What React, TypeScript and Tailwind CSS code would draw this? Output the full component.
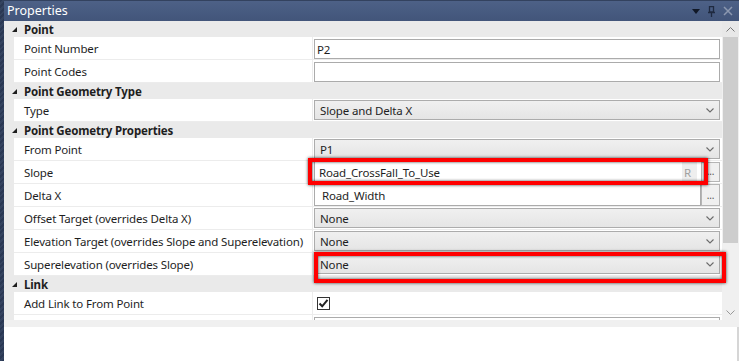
import React from 'react';

type Row =
  | { kind: 'cat'; label: string }
  | { kind: 'text'; label: string; value: string; cut?: boolean }
  | { kind: 'drop'; label: string; value: string; mark?: boolean }
  | { kind: 'slope'; label: string; value: string }
  | { kind: 'dots'; label: string; value: string }
  | { kind: 'check'; label: string };

const rows: Row[] = [
  { kind: 'cat', label: 'Point' },
  { kind: 'text', label: 'Point Number', value: 'P2' },
  { kind: 'text', label: 'Point Codes', value: '' },
  { kind: 'cat', label: 'Point Geometry Type' },
  { kind: 'drop', label: 'Type', value: 'Slope and Delta X' },
  { kind: 'cat', label: 'Point Geometry Properties' },
  { kind: 'drop', label: 'From Point', value: 'P1' },
  { kind: 'slope', label: 'Slope', value: 'Road_CrossFall_To_Use' },
  { kind: 'dots', label: 'Delta X', value: 'Road_Width' },
  { kind: 'drop', label: 'Offset Target (overrides Delta X)', value: 'None' },
  { kind: 'drop', label: 'Elevation Target (overrides Slope and Superelevation)', value: 'None' },
  { kind: 'drop', label: 'Superelevation (overrides Slope)', value: 'None', mark: true },
  { kind: 'cat', label: 'Link' },
  { kind: 'check', label: 'Add Link to From Point' },
  { kind: 'text', label: 'Name', value: 'M', cut: true },
];

const Chevron = () => (
  <svg width="8" height="5" viewBox="0 0 8 5" className="shrink-0">
    <path d="M0.5 0.5 L4 4 L7.5 0.5" fill="none" stroke="#6b6b6b" strokeWidth="1.1" />
  </svg>
);

const DotsButton = () => (
  <div className="w-[19px] h-full shrink-0 border border-[#b5b5b5] bg-[#f0f0f0] flex items-end justify-center pb-[5px] text-[10px] leading-none text-[#555]">
    ...
  </div>
);

const Value: React.FC<{ row: Row }> = ({ row }) => {
  if (row.kind === 'text') {
    return (
      <div className="h-[20px] mt-[2px] mr-[2px] border border-[#ababab] bg-white flex items-center pl-[2px] pt-[1px]">
        {row.value}
      </div>
    );
  }
  if (row.kind === 'drop') {
    return (
      <div className="relative h-full">
        <div className="h-[20px] mt-[1px] mr-[2px] border border-[#acacac] bg-gradient-to-b from-[#f0f0f0] to-[#e5e5e5] flex items-center justify-between pl-[5px] pr-[5px]">
          <span className="pt-[1px]">{row.value}</span>
          <Chevron />
        </div>
        {row.mark && (
          <div className="absolute z-10 left-0 top-[-2px] w-[412px] h-[31px] border-4 border-[#ff0000] shadow-[0_0_3px_rgba(0,0,0,0.75),inset_0_0_3px_rgba(0,0,0,0.75)]" />
        )}
      </div>
    );
  }
  if (row.kind === 'slope') {
    return (
      <div className="relative h-full flex items-stretch pt-[1px] pb-[1px] mr-[2px]">
        <div className="flex-1 bg-white flex items-center pl-[4px] pt-[1px] border-l border-[#ababab]">
          {row.value}
        </div>
        <div className="w-[15px] bg-[#eeeeee] text-[#a0a0a0] flex items-center pl-[2px] pt-[1px] overflow-hidden">R</div>
        <div className="w-[4px] bg-white" />
        <DotsButton />
        <div className="absolute z-10 left-[-6px] top-[-3px] w-[400px] h-[27px] border-4 border-[#ff0000] shadow-[0_0_3px_rgba(0,0,0,0.75),inset_0_0_3px_rgba(0,0,0,0.75)]" />
      </div>
    );
  }
  if (row.kind === 'dots') {
    return (
      <div className="h-full flex items-stretch mr-[2px]">
        <div className="flex-1 bg-white border border-[#ababab] flex items-center pl-[7px] pt-[1px]">{row.value}</div>
        <DotsButton />
      </div>
    );
  }
  if (row.kind === 'check') {
    return (
      <div className="h-full flex items-center pl-[3px]">
        <div className="w-[13px] h-[13px] border border-[#333] bg-white flex items-center justify-center">
          <svg width="11" height="11" viewBox="0 0 11 11">
            <path d="M1.5 5.5 L4.2 8.3 L9.5 1.8" fill="none" stroke="#222" strokeWidth="2" />
          </svg>
        </div>
      </div>
    );
  }
  return null;
};

export default function App() {
  return (
    <div className="w-[739px] h-[361px] flex overflow-hidden bg-[#2b3a56] font-['Segoe_UI','Noto_Sans',sans-serif] text-[11.5px] tracking-[-0.15px] text-[#1e1e1e]">
      {/* striped window frame */}
      <div className="w-[4px] h-full bg-[repeating-linear-gradient(135deg,#2a3854_0px,#2a3854_2px,#34435f_2px,#34435f_4px)]" />
      <div className="flex-1 flex flex-col min-w-0">
        <div className="h-[21px] shrink-0 bg-gradient-to-b from-[#4d6187] to-[#42557a] border-t border-[#33425f] flex items-center pl-[3px] pr-[6px]">
          <span className="text-white text-[12.5px] tracking-normal leading-none">Properties</span>
          <div className="ml-auto flex items-center gap-[8px]">
            <svg width="8" height="5" viewBox="0 0 8 5"><path d="M0 0 H8 L4 5 Z" fill="#111827" /></svg>
            <svg width="7" height="11" viewBox="0 0 7 11">
              <path d="M1.5 0.5 H5.5 V6 H1.5 Z M0 6.5 H7 M3.5 6.5 V11" fill="none" stroke="#1f2a40" strokeWidth="1.3" />
            </svg>
            <svg width="10" height="10" viewBox="0 0 10 10">
              <path d="M1 1 L9 9 M9 1 L1 9" stroke="#8c98b0" strokeWidth="1.5" />
            </svg>
          </div>
        </div>

        <div className="h-[299px] shrink-0 flex bg-white">
          <div className="flex-1 flex flex-col">
            {rows.map((row, i) =>
              row.kind === 'cat' ? (
                <div key={i} className="h-[16px] shrink-0 bg-[#eaeaea] flex items-center">
                  <div className="w-[20px] flex justify-center">
                    <svg width="5" height="5" viewBox="0 0 5 5"><path d="M5 0 V5 H0 Z" fill="#1e1e1e" /></svg>
                  </div>
                  <span className="font-bold pt-[1px]">{row.label}</span>
                </div>
              ) : (
                <div key={i} className={row.kind === 'text' && row.cut ? 'h-[5px] shrink-0 overflow-hidden' : 'h-[23px] shrink-0'}>
                  <div className="h-[23px] flex">
                    <div className="w-[10px] bg-[#eaeaea]" />
                    <div className="w-[299px] shrink-0 border-b border-r border-[#ececec] flex items-center pl-[10px] pt-[2px] whitespace-nowrap overflow-hidden">
                      {row.label}
                    </div>
                    <div className="flex-1 pl-[1px] border-b border-[#ececec]">
                      <Value row={row} />
                    </div>
                  </div>
                </div>
              )
            )}
          </div>
          {/* scrollbar */}
          <div className="w-[17px] shrink-0 flex flex-col bg-[#f0f0f0]">
            <div className="h-[16px] flex items-center justify-center bg-[#e8e8e8]">
              <svg width="9" height="5" viewBox="0 0 9 5"><path d="M0.5 4.5 L4.5 0.5 L8.5 4.5" fill="none" stroke="#777" strokeWidth="1" /></svg>
            </div>
            <div className="h-[206px] mx-[1px] bg-[#cdcdcd]" />
            <div className="flex-1" />
            <div className="h-[16px] flex items-center justify-center">
              <svg width="9" height="5" viewBox="0 0 9 5"><path d="M0.5 0.5 L4.5 4.5 L8.5 0.5" fill="none" stroke="#999" strokeWidth="1" /></svg>
            </div>
          </div>
        </div>

        <div className="h-[7px] shrink-0 bg-[#f0f0f0]" />
        <div className="flex-1 bg-white border-r-2 border-[#d6d6d6]" />
      </div>
    </div>
  );
}
